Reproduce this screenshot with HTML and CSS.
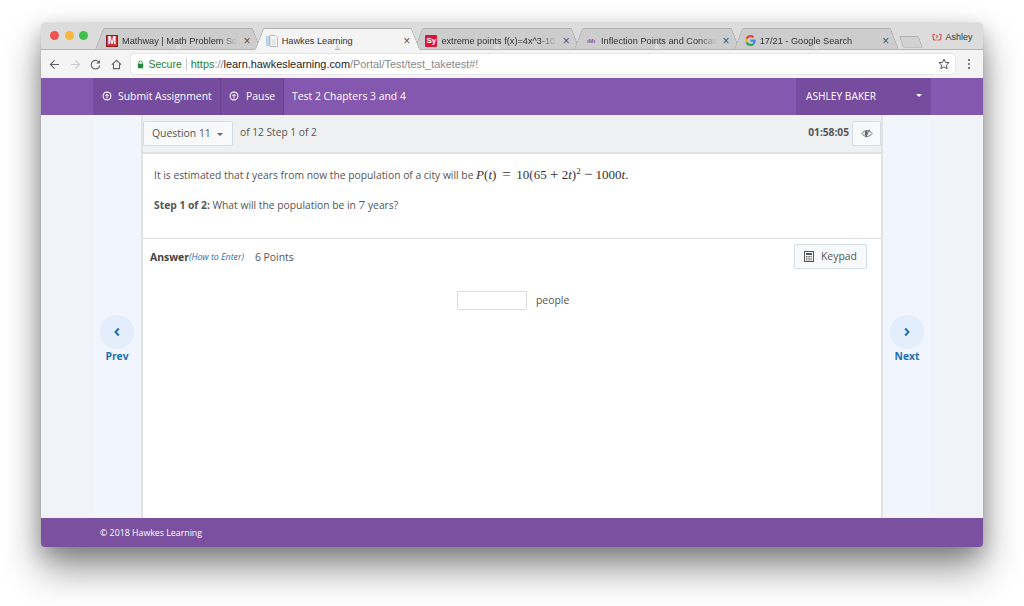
FILE: index.html
```html
<!DOCTYPE html>
<html lang="en">
<head>
<meta charset="utf-8">
<title>Hawkes Learning</title>
<link rel="stylesheet" href="styles.css">
</head>
<body>
<div class="window">
  <div class="tabstrip">
    <div class="lights"><i class="red"></i><i class="amber"></i><i class="green"></i></div>
    <div class="tab"><span class="fav fav-m">M</span><span class="tab-title">Mathway | Math Problem Sol</span><span class="tab-x">×</span></div>
    <div class="tab active"><svg class="fav" viewBox="0 0 12 12"><rect x="0" y="1" width="5" height="10" fill="#b9d3ee"/><path d="M4 .5h5l2.500 2.500v8.500H4z" fill="#fff" stroke="#aaa" stroke-width=".8"/><path d="M5.500 5h4.500M5.500 7h4.500M5.500 9h4.500" stroke="#bbb" stroke-width=".8"/></svg><span class="tab-title">Hawkes Learning</span><span class="tab-x">×</span></div>
    <div class="tab"><span class="fav fav-sy">Sy</span><span class="tab-title">extreme points f(x)=4x^3-10</span><span class="tab-x">×</span></div>
    <div class="tab"><span class="fav fav-im">ıMı</span><span class="tab-title">Inflection Points and Concav</span><span class="tab-x">×</span></div>
    <div class="tab"><svg class="fav fav-g" viewBox="0 0 48 48"><path fill="#EA4335" d="M24 9.500c3.500 0 6.700 1.300 9.100 3.500l6.800-6.800C35.800 2.400 30.200 0 24 0 14.600 0 6.500 5.400 2.600 13.200l7.900 6.200C12.400 13.600 17.700 9.500 24 9.500z"/><path fill="#4285F4" d="M46.900 24.500c0-1.600-.1-3.100-.4-4.500H24v9h12.900c-.6 3-2.200 5.500-4.800 7.200l7.700 6c4.500-4.200 7.100-10.300 7.100-17.700z"/><path fill="#FBBC05" d="M10.500 28.600c-.5-1.400-.8-3-.8-4.600s.3-3.200.8-4.600l-7.900-6.200C.9 16.500 0 20.100 0 24s.9 7.500 2.600 10.800l7.900-6.200z"/><path fill="#34A853" d="M24 48c6.500 0 11.900-2.100 15.900-5.800l-7.700-6c-2.200 1.400-4.900 2.300-8.200 2.300-6.300 0-11.600-4.200-13.500-9.900l-7.900 6.200C6.500 42.600 14.600 48 24 48z"/></svg><span class="tab-title">17/21 - Google Search</span><span class="tab-x">×</span></div>
    <div class="newtab"></div>
    <div class="profile"><svg class="profile-icon" viewBox="0 0 12 10"><path d="M3.500 1.200 1 2l.8 5.500 2.400.9M8.500 1.200 11 2l-.8 5.500-2.400.9" fill="none" stroke="#d9443f" stroke-width="1.300"/><path d="M6 2v4M6 7.500v1" stroke="#d9443f" stroke-width="1.300"/></svg><span>Ashley</span></div>
  </div>
  <div class="toolbar">
    <svg class="tool" viewBox="0 0 12 12"><path d="M11 6H1.500M6 1.500 1.500 6 6 10.500" fill="none" stroke="#666" stroke-width="1.200"/></svg>
    <svg class="tool dim" viewBox="0 0 12 12"><path d="M1 6h9.500M6 1.500 10.500 6 6 10.500" fill="none" stroke="#ccc" stroke-width="1.200"/></svg>
    <svg class="tool" viewBox="0 0 12 12"><path d="M10.300 4.200A4.700 4.700 0 1 0 10.700 7" fill="none" stroke="#666" stroke-width="1.200"/><path d="M10.800 .8v4h-4z" fill="#666"/></svg>
    <svg class="tool" viewBox="0 0 12 12"><path d="M1 6.200 6 1.500l5 4.700M2.700 5v5.500h6.600V5" fill="none" stroke="#666" stroke-width="1.200"/></svg>
    <div class="omnibox">
      <svg class="lock" viewBox="0 0 8 10"><path d="M2 4.500V3a2 2 0 0 1 4 0v1.500" fill="none" stroke="#1e8e3e" stroke-width="1"/><rect x="1" y="4.200" width="6" height="5" rx=".6" fill="#1e8e3e"/></svg>
      <span class="secure">Secure</span>
      <span class="url"><span class="https">https</span><span class="path">://</span>learn.hawkeslearning.com<span class="path">/Portal/Test/test_taketest#!</span></span>
      <svg class="star" viewBox="0 0 12 12"><path d="M6 1l1.500 3.300 3.500.4-2.600 2.400.7 3.500L6 8.900l-3.100 1.700.7-3.500L1 4.700l3.500-.4z" fill="none" stroke="#555" stroke-width="1"/></svg>
    </div>
    <div class="kebab"><i></i><i></i><i></i></div>
  </div>
  <nav class="appnav">
    <div class="nav-inner">
      <a class="nav-btn submit"><svg class="up" viewBox="0 0 10 10"><circle cx="5" cy="5" r="3.900" fill="none" stroke="#fff" stroke-width="1.100"/><path d="M5 7.500V3.500M3.300 5 5 3.200 6.700 5" fill="none" stroke="#fff"/></svg>Submit Assignment</a>
      <a class="nav-btn pause"><svg class="up" viewBox="0 0 10 10"><circle cx="5" cy="5" r="3.900" fill="none" stroke="#fff" stroke-width="1.100"/><path d="M5 7.500V3.500M3.300 5 5 3.200 6.700 5" fill="none" stroke="#fff"/></svg>Pause</a>
      <span class="nav-title">Test 2 Chapters 3 and 4</span>
      <a class="nav-user"><span>ASHLEY BAKER</span><i class="caret"></i></a>
    </div>
  </nav>
  <div class="content">
    <aside class="side">
      <div class="circle"><svg viewBox="0 0 8 10"><path d="M5.800 1.500 2.500 5l3.300 3.500" fill="none" stroke="#1f6fb2" stroke-width="2"/></svg></div>
      <span class="side-label">Prev</span>
    </aside>
    <main class="main">
      <div class="qbar">
        <button class="qselect">Question 11<i class="caret dark"></i></button>
        <span class="qof">of 12 Step 1 of 2</span>
        <span class="timer">01:58:05</span>
        <button class="eye"><svg viewBox="0 0 14 10"><path d="M1 5c1.800-2.300 3.800-3.400 6-3.400S11.200 2.700 13 5c-1.800 2.300-3.800 3.400-6 3.400S2.800 7.300 1 5z" fill="none" stroke="#555" stroke-width="1"/><path d="M5 2.200 7.800 2.600 6 8 4.400 6.500z" fill="#555"/><path d="M10 .5 5.500 9.500" stroke="#555" stroke-width="1.100"/></svg></button>
      </div>
      <section class="question">
        <p class="qtext">It is estimated that <em class="var">t</em> years from now the population of a city will be <span class="math"><em>P</em>(<em>t</em>) <span class="op wide">=</span> 10(65 <span class="op">+</span> 2<em>t</em>)<sup>2</sup> <span class="op">−</span> 1000<em>t</em>.</span></p>
        <p class="qtext step"><strong>Step 1 of 2:</strong> What will the population be in <span class="num">7</span> years?</p>
      </section>
      <section class="answer">
        <div class="answer-head">
          <strong class="answer-label">Answer</strong><a class="howto">(How to Enter)</a>
          <span class="points">6 Points</span>
          <button class="keypad"><svg viewBox="0 0 10 11"><rect x=".5" y=".5" width="9" height="10" fill="none" stroke="#555"/><rect x="2" y="2" width="6" height="2" fill="#555"/><path d="M2 5.500h6M2 7.200h6M2 8.900h6" stroke="#555" stroke-dasharray="1 .6"/></svg>Keypad</button>
        </div>
        <div class="entry"><input class="entry-input" type="text" aria-label="Answer"><span class="unit">people</span></div>
      </section>
    </main>
    <aside class="side">
      <div class="circle"><svg viewBox="0 0 8 10"><path d="M2.200 1.500 5.500 5 2.200 8.500" fill="none" stroke="#1f6fb2" stroke-width="2"/></svg></div>
      <span class="side-label">Next</span>
    </aside>
  </div>
  <footer class="foot">© 2018 Hawkes Learning</footer>
</div>
</body>
</html>
```
FILE: styles.css
```css
* { box-sizing: border-box; }
html, body { margin: 0; height: 100%; overflow: hidden; background: #fff; }
body { padding: 23px 41px 0; font-family: "Open Sans", sans-serif; color: #555; }
button { font-family: inherit; }

.window {
  height: 524px;
  display: flex;
  flex-direction: column;
  border-radius: 4px;
  background: #fff;
  box-shadow: 0 0 1px rgba(0,0,0,.3), 0 22px 38px rgba(0,0,0,.42), 0 6px 20px rgba(0,0,0,.22);
}

/* Browser chrome */
.tabstrip {
  height: 27px;
  flex: none;
  display: flex;
  align-items: flex-end;
  background: #dcdcdc;
  border-radius: 4px 4px 0 0;
  border-bottom: 1px solid #b4b4b4;
  font-family: "Liberation Sans", sans-serif;
  font-size: 9.200px;
  color: #333;
}
.lights { width: 58px; align-self: center; display: flex; gap: 5.500px; padding: 0 0 2px 9px; flex: none; }
.lights i { width: 9px; height: 9px; border-radius: 50%; }
.red { background: #f0524f; }
.amber { background: #f6b73c; }
.green { background: #3fc04f; }
.tab {
  position: relative;
  width: 157px;
  height: 22px;
  margin-right: 2.700px;
  margin-bottom: -1px;
  padding: 3px 4px 0 7px;
  flex: none;
  display: flex;
  align-items: center;
  gap: 4px;
  z-index: 1;
}
.tab::before, .tab::after {
  content: "";
  position: absolute;
  top: 0;
  bottom: 0;
  width: 50%;
  background: #cdcdcd;
  border-top: 1px solid #b0b0b0;
  border-bottom: 1px solid #b4b4b4;
  z-index: -1;
}
.tab::before { left: 0; transform: skewX(-21deg); border-left: 1px solid #aaa; border-radius: 2px 0 0 0; }
.tab::after { right: 0; transform: skewX(21deg); border-right: 1px solid #aaa; border-radius: 0 2px 0 0; }
.tab.active { z-index: 2; }
.tab.active::before, .tab.active::after { background: #f4f4f4; border-bottom-color: #f4f4f4; }
.fav { width: 12px; height: 12px; flex: none; }
.fav-g { width: 11px; height: 11px; }
.fav-m { background: #cf3a34; border: 1px solid #8c1c1c; color: #fff; font: bold 10px/10px "Liberation Sans", sans-serif; text-align: center; }
.fav-sy { background: #dc143c; border-radius: 1px; color: #fff; font: bold 8px/12px "Liberation Sans", sans-serif; text-align: center; }
.fav-im { color: #8e5aa8; font: bold 6px/12px "Liberation Sans", sans-serif; text-align: center; }
.tab-title {
  flex: 1;
  min-width: 0;
  white-space: nowrap;
  overflow: hidden;
  -webkit-mask-image: linear-gradient(to right, #000 85%, transparent);
  mask-image: linear-gradient(to right, #000 85%, transparent);
}
.tab.active .tab-title { -webkit-mask-image: none; mask-image: none; }
.tab-x { width: 10px; text-align: center; font-size: 12px; line-height: 12px; color: #555; flex: none; }
.newtab {
  width: 20px;
  height: 12px;
  margin: 0 0 1px 4px;
  flex: none;
  background: #d2d2d2;
  border: 1px solid #b0b0b0;
  border-bottom-color: #c4c4c4;
  border-radius: 2px;
  transform: skewX(20deg);
}
.profile { display: flex; align-items: center; gap: 3px; margin-left: 11px; padding-bottom: 7px; align-self: flex-end; font-size: 9px; }
.profile-icon { width: 10px; height: 9px; }

.toolbar {
  height: 28px;
  flex: none;
  display: flex;
  align-items: center;
  padding-left: 8px;
  background: #f4f4f4;
  font-family: "Liberation Sans", sans-serif;
}
.tool { width: 11px; height: 11px; margin-right: 9.500px; flex: none; }
.omnibox {
  flex: 1;
  height: 20px;
  margin-left: -.5px;
  display: flex;
  align-items: center;
  padding: 0 5px 0 6px;
  background: #fff;
  border-radius: 3px;
  box-shadow: 0 0 0 1px #e6e6e6;
  font-size: 10.500px;
  white-space: nowrap;
}
.lock { width: 7px; height: 9px; margin-right: 5px; }
.secure { color: #1e7e34; padding-right: 4px; margin-right: 4px; border-right: 1px solid #ccc; line-height: 13px; }
.url { flex: 1; color: #222; font-size: 10.900px; }
.https { color: #1e7e34; }
.path { color: #888; }
.star { width: 12px; height: 12px; }
.kebab { width: 28px; display: flex; flex-direction: column; align-items: center; gap: 2px; }
.kebab i { width: 2px; height: 2px; background: #555; border-radius: 50%; }

/* App nav */
.appnav { height: 37px; flex: none; background: #8558b0; padding: 0 52px; color: #fff; font-size: 10.400px; }
.nav-inner { height: 100%; display: flex; align-items: stretch; }
.nav-btn {
  display: flex;
  align-items: center;
  gap: 6px;
  padding: 0 0 2px 8px;
  background: #764c9f;
  border-right: 1px solid #68418f;
}
.submit { width: 128px; border-left: 1px solid #7a50a3; }
.pause { width: 63px; gap: 7px; }
.up { width: 10px; height: 10px; }
.nav-title { flex: 1; align-self: center; padding: 0 0 2px 8px; }
.nav-user {
  width: 135px;
  display: flex;
  align-items: center;
  justify-content: space-between;
  padding: 0 9px 2px 10px;
  background: #764c9f;
  font-size: 10.200px;
}
.caret { width: 0; height: 0; border: 3px solid transparent; border-top-color: #fff; border-bottom: 0; }
.caret.dark { border-top-color: #666; margin-left: 6px; display: inline-block; vertical-align: middle; }

/* Test area */
.content { flex: 1; min-height: 0; display: flex; background: #f0f4f8; padding: 0 52px; }
.side { width: 48px; flex: none; background: #f1f6fe; display: flex; flex-direction: column; align-items: center; padding-top: 200px; }
.circle { width: 34px; height: 34px; border-radius: 50%; background: #e3eefd; display: flex; align-items: center; justify-content: center; }
.circle svg { width: 8px; height: 10px; }
.side-label { font-size: 10.300px; line-height: 14px; font-weight: 700; color: #1f6fb2; }

.main { flex: 1; min-width: 0; display: flex; flex-direction: column; background: #fff; border: solid #e2e2e2; border-width: 0 2px; }
.qbar { height: 39px; flex: none; display: flex; align-items: flex-start; padding-top: 6px; background: #eff0f2; border-bottom: 2px solid #e2e2e2; font-size: 10.200px; }
.qselect {
  width: 90px;
  height: 25px;
  padding: 0 0 1px 8px;
  text-align: left;
  background: #f7f9fb;
  border: 1px solid #d5dde5;
  border-radius: 2px;
  font-size: 10.400px;
  color: #555;
}
.qof { margin-left: 7px; padding-top: 4px; }
.timer { margin-left: auto; padding-top: 4px; font-weight: 700; }
.eye { width: 29px; height: 25px; margin-left: 3px; padding: 0; background: #f7f9fb; border: 1px solid #d5dde5; border-radius: 2px; display: flex; align-items: center; justify-content: center; }
.eye svg { width: 12px; height: 9px; }

.question { height: 85px; flex: none; padding: 12px 11px 0; border-bottom: 1px solid #ddd; }
.qtext { margin: 0; font-size: 10.300px; line-height: 18px; }
.step { margin-top: 12px; }
.step strong { font-weight: 700; }
.var { font-family: "Liberation Serif", serif; font-size: 12px; }
.math { font-family: "Liberation Serif", serif; font-size: 13px; color: #333; }
.math sup { font-size: 9px; line-height: 0; }
.op { font-size: 15px; line-height: 0; }
.op.wide { padding: 0 2.500px; }
.num { font-family: "Liberation Serif", serif; font-size: 13.500px; line-height: 0; }

.answer { flex: 1; min-height: 0; }
.answer-head { display: flex; align-items: center; height: 30px; padding: 5px 14px 0 7px; }
.answer-label { font-size: 10.400px; font-weight: 700; color: #444; }
.howto { font-size: 8.800px; font-style: italic; color: #1f6fb2; }
.points { margin-left: 11px; font-size: 10.400px; }
.keypad {
  margin-left: auto;
  width: 73px;
  height: 25px;
  padding: 0 0 1px 9px;
  display: flex;
  align-items: center;
  gap: 7px;
  background: #f7f9fb;
  border: 1px solid #d5dde5;
  border-radius: 2px;
  font-size: 10.400px;
  color: #555;
}
.keypad svg { width: 10px; height: 11px; }
.entry { display: flex; align-items: center; gap: 9px; margin: 22px 0 0 314px; }
.entry-input { width: 70px; height: 19px; background: #fff; border: 1px solid #ddd; border-radius: 1px; }
.unit { font-size: 10.400px; padding-bottom: 2px; }

.foot { height: 29px; flex: none; display: flex; align-items: center; padding: 1px 0 0 59px; background: #7a509f; border-radius: 0 0 4px 4px; color: #fff; font-size: 8.800px; }
```
